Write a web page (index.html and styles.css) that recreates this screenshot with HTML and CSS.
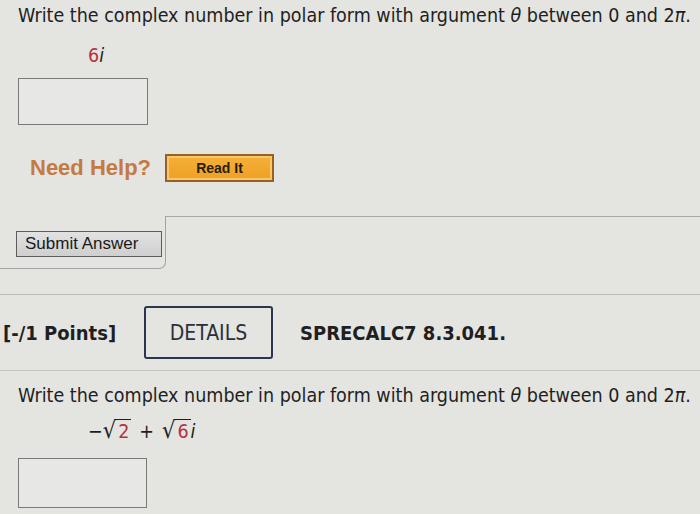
FILE: index.html
```html
<!DOCTYPE html>
<html lang="en">
<head>
<meta charset="UTF-8">
<title>Polar Form</title>
<link rel="stylesheet" href="styles.css">
</head>
<body>
<div class="question">
    <p class="prompt">Write the complex number in polar form with argument <i>θ</i> between 0 and 2<i>π</i>.</p>
    <div class="expr"><span class="val">6</span><i>i</i></div>
    <div class="answer-box"></div>
    <div class="help">
        <span class="need">Need Help?</span>
        <button class="read">Read It</button>
    </div>
</div>

<div class="submit-row">
    <div class="submit-tab"><button class="submit">Submit Answer</button></div>
    <div class="submit-rest"></div>
</div>

<div class="q-header">
    <span class="points">[-/1 Points]</span>
    <span class="details">DETAILS</span>
    <span class="code">SPRECALC7 8.3.041.</span>
</div>

<div class="question second">
    <p class="prompt">Write the complex number in polar form with argument <i>θ</i> between 0 and 2<i>π</i>.</p>
    <div class="expr">−<span class="rad"><span class="root">√</span><span class="under"><span class="val">2</span></span></span><span class="op">+</span><span class="rad"><span class="root">√</span><span class="under"><span class="val">6</span></span></span><i>i</i></div>
    <div class="answer-box"></div>
</div>
</body>
</html>
```

FILE: styles.css
```css
body {
    margin: 0;
    background-color: #e4e4e1;
    color: #1f1f1f;
    font-family: "DejaVu Sans Condensed", "DejaVu Sans", sans-serif;
}
.question {
    padding-left: 18px;
}
.prompt {
    margin: 0;
    padding-top: 6px;
    font-size: 19.5px;
    line-height: 20px;
}
.expr {
    margin: 20px 0 0 70px;
    font-size: 19.5px;
    line-height: 20px;
}
.val {
    color: #b5323f;
}
.answer-box {
    width: 130px;
    height: 47px;
    margin-top: 12px;
    border: 1px solid #7a7a78;
    box-sizing: border-box;
    background-color: #e7e7e5;
}
.help {
    display: flex;
    align-items: center;
    gap: 14px;
    margin: 29px 0 0 12px;
}
.need {
    font-family: "Liberation Sans", Arial, sans-serif;
    font-weight: bold;
    font-size: 22px;
    color: #c47a40;
}
.read {
    width: 109px;
    height: 28px;
    padding: 0;
    font-family: "Liberation Sans", Arial, sans-serif;
    font-weight: bold;
    font-size: 14px;
    color: #2a1e10;
    background: linear-gradient(#f4b03a, #eea024);
    border: 2px solid #9a5f22;
    box-shadow: inset 0 0 0 2px #f6c869;
}
.submit-row {
    display: flex;
    margin-top: 34px;
}
.submit-tab {
    width: 166px;
    height: 53px;
    box-sizing: border-box;
    padding: 15px 0 0 16px;
    border-right: 1px solid #a2a2a0;
    border-bottom: 1px solid #a2a2a0;
    border-bottom-right-radius: 7px;
}
.submit {
    width: 146px;
    height: 26px;
    padding: 0 0 0 8px;
    text-align: left;
    font-family: "Liberation Sans", Arial, sans-serif;
    font-size: 17px;
    color: #1a1a1a;
    background: linear-gradient(#e2e2e2, #cfcfcf);
    border: 1px solid #5c5c5c;
}
.submit-rest {
    flex: 1;
    border-top: 1px solid #a8a8a6;
}
.q-header {
    display: flex;
    align-items: center;
    margin-top: 25px;
    padding: 11px 0 11px 3px;
    border-top: 1px solid #bcbcba;
    border-bottom: 1px solid #c4c4c2;
}
.points {
    width: 141px;
    font-weight: bold;
    font-size: 20px;
}
.details {
    width: 129px;
    height: 53px;
    box-sizing: border-box;
    display: flex;
    align-items: center;
    justify-content: center;
    font-size: 21px;
    color: #2a2f3a;
    border: 2px solid #2b3550;
    border-radius: 3px;
}
.code {
    margin-left: 27px;
    font-weight: bold;
    font-size: 20px;
}
.second .prompt {
    padding-top: 15px;
}
.second .expr {
    margin-top: 14px;
}
.rad {
    white-space: nowrap;
}
.root {
    font-size: 1.2em;
}
.under {
    border-top: 1px solid #1f1f1f;
    padding: 0 2px;
}
.op {
    margin: 0 8px;
}
.second .answer-box {
    width: 129px;
    height: 50px;
    margin-top: 16px;
}
```
